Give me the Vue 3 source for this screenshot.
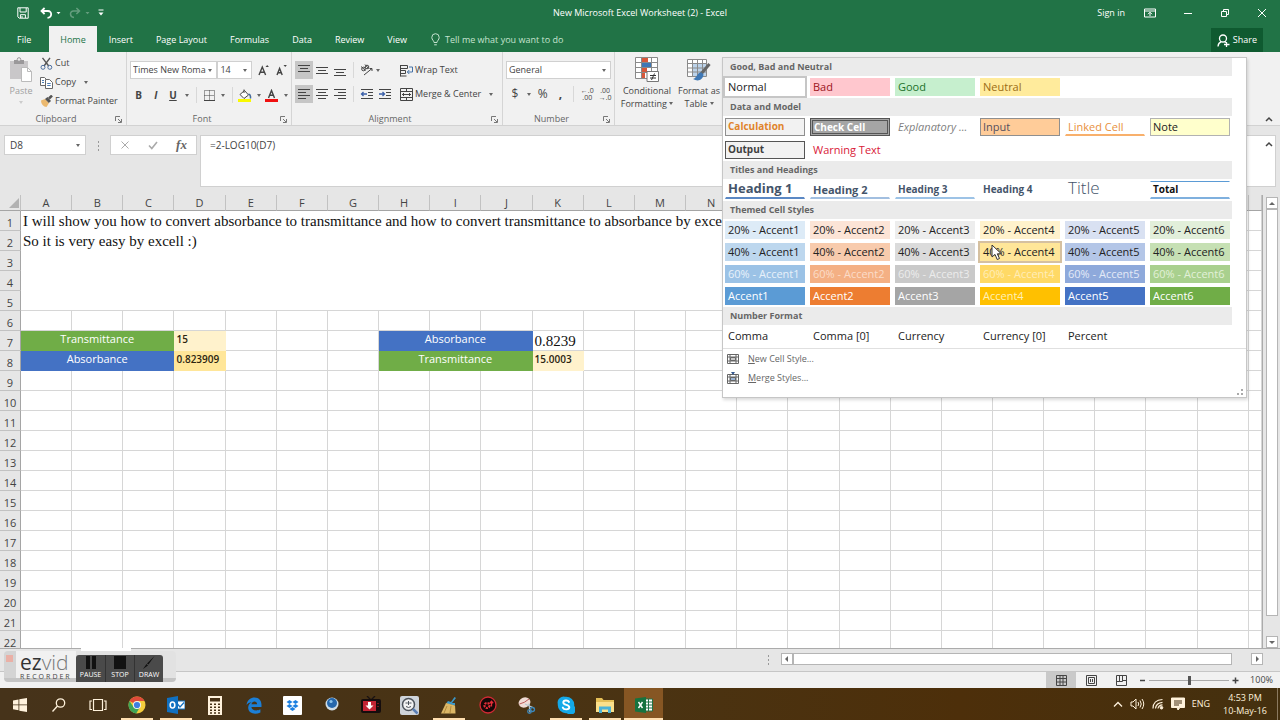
<script setup>
import { ref } from 'vue'

const activeTab = ref('Home')
const tabs = ['File', 'Home', 'Insert', 'Page Layout', 'Formulas', 'Data', 'Review', 'View']

const fontName = ref('Times New Roman')
const fontSize = ref('14')
const numberFormat = ref('General')
const cellRef = ref('D8')
const formula = ref('=2-LOG10(D7)')
const zoom = ref(100)

const accents = [1, 2, 3, 4, 5, 6]

const sections = [
  {
    title: 'Good, Bad and Neutral',
    items: [
      { label: 'Normal', kind: 'normal' },
      { label: 'Bad', kind: 'bad' },
      { label: 'Good', kind: 'good' },
      { label: 'Neutral', kind: 'neutral' },
    ],
  },
  {
    title: 'Data and Model',
    roomy: true,
    items: [
      { label: 'Calculation', kind: 'calculation' },
      { label: 'Check Cell', kind: 'check' },
      { label: 'Explanatory ...', kind: 'explanatory' },
      { label: 'Input', kind: 'input' },
      { label: 'Linked Cell', kind: 'linked' },
      { label: 'Note', kind: 'note' },
      { label: 'Output', kind: 'output' },
      { label: 'Warning Text', kind: 'warning' },
    ],
  },
  {
    title: 'Titles and Headings',
    items: [
      { label: 'Heading 1', kind: 'heading1' },
      { label: 'Heading 2', kind: 'heading2' },
      { label: 'Heading 3', kind: 'heading3' },
      { label: 'Heading 4', kind: 'heading4' },
      { label: 'Title', kind: 'title' },
      { label: 'Total', kind: 'total' },
    ],
  },
  {
    title: 'Themed Cell Styles',
    items: [
      ...accents.map((n) => ({ label: `20% - Accent${n}`, kind: `a20-${n}` })),
      ...accents.map((n) => ({ label: `40% - Accent${n}`, kind: `a40-${n}` })),
      ...accents.map((n) => ({ label: `60% - Accent${n}`, kind: `a60-${n}` })),
      ...accents.map((n) => ({ label: `Accent${n}`, kind: `a100-${n}` })),
    ],
  },
  {
    title: 'Number Format',
    items: ['Comma', 'Comma [0]', 'Currency', 'Currency [0]', 'Percent'].map((label) => ({ label, kind: 'number' })),
  },
]

const columns = 'ABCDEFGHIJKLMNOPQRSTUVWX'.split('')

const blanks = (count) => Array.from({ length: count }, () => ({ text: '', span: 1, kind: '' }))

const filled = {
  1: [
    {
      text: 'I will show you how to convert absorbance to transmittance and how to convert transmittance to absorbance by excell',
      span: 23,
      kind: 'note',
    },
    ...blanks(2),
  ],
  2: [{ text: 'So it is very easy by excell :)', span: 23, kind: 'note' }, ...blanks(2)],
  3: [{ text: '', span: 23, kind: 'note' }, ...blanks(2)],
  4: [{ text: '', span: 23, kind: 'note' }, ...blanks(2)],
  5: [{ text: '', span: 23, kind: 'note-end' }, ...blanks(2)],
  7: [
    { text: 'Transmittance', span: 3, kind: 'green' },
    { text: '15', span: 1, kind: 'pale' },
    ...blanks(3),
    { text: 'Absorbance', span: 3, kind: 'blue' },
    { text: '0.8239', span: 1, kind: 'serif' },
    ...blanks(14),
  ],
  8: [
    { text: 'Absorbance', span: 3, kind: 'blue' },
    { text: '0.823909', span: 1, kind: 'gold' },
    ...blanks(3),
    { text: 'Transmittance', span: 3, kind: 'green' },
    { text: '15.0003', span: 1, kind: 'pale' },
    ...blanks(14),
  ],
}

const rows = Array.from({ length: 22 }, (_, i) => ({ number: i + 1, cells: filled[i + 1] ?? blanks(25) }))
</script>

<template>
  <div class="excel">
    <header class="titlebar">
      <div class="quick">
        <button type="button" aria-label="Save">
          <svg width="12" height="12" viewBox="0 0 12 12"><path d="M.8.8h10.4v10.4H2.3L.8 9.8zM3 1v4h6.2V1M3.4 11V7.7h5V11M5 9v2" /></svg>
        </button>
        <button type="button" aria-label="Undo" class="quick__undo">
          <svg width="22" height="12" viewBox="0 0 22 12"><path d="M4.6 1 1.5 4l3.1 3M2 4h6c4.2 0 4.4 6.3-.5 6.8" stroke-width="1.8" /><path d="m16.5 5 2 2.2 2-2.2z" class="solid" /></svg>
        </button>
        <button type="button" aria-label="Redo" class="quick__redo">
          <svg width="22" height="12" viewBox="0 0 22 12"><path d="m7.4 1 3.1 3-3.1 3M10 4H4.5C.4 4 .4 10 5 10.5" stroke-width="1.5" /><path d="m16.5 5 2 2.2 2-2.2z" class="solid" /></svg>
        </button>
        <button type="button" aria-label="Customize toolbar">
          <svg width="6" height="8" viewBox="0 0 6 8"><path d="M.5 1h5" /><path d="m.5 3.5 2.5 3 2.5-3z" class="solid" /></svg>
        </button>
      </div>
      <h1 class="titlebar__name">New Microsoft Excel Worksheet (2) - Excel</h1>
      <div class="window">
        <a href="#" class="window__signin">Sign in</a>
        <button type="button" aria-label="Ribbon display options">
          <svg width="12" height="10" viewBox="0 0 12 10"><path d="M.5 1h11v8H.5zM.5 3h11M6 8V4.5M4 6.2l2-2 2 2" /></svg>
        </button>
        <button type="button" aria-label="Minimize"><svg width="10" height="10" viewBox="0 0 10 10"><path d="M1 5.5h8" /></svg></button>
        <button type="button" aria-label="Restore"><svg width="10" height="10" viewBox="0 0 10 10"><path d="M1.5 3.5h5v5h-5zM3.5 3V1.5h5v5H7" /></svg></button>
        <button type="button" aria-label="Close"><svg width="10" height="10" viewBox="0 0 10 10"><path d="m1 1 8 8M9 1 1 9" /></svg></button>
      </div>
    </header>

    <nav class="tabs">
      <button
        v-for="tab in tabs"
        :key="tab"
        type="button"
        class="tabs__tab"
        :class="{ 'tabs__tab--active': tab === activeTab, 'tabs__tab--file': tab === 'File' }"
        @click="activeTab = tab"
      >
        {{ tab }}
      </button>
      <button type="button" class="tabs__tell">
        <svg width="9" height="13" viewBox="0 0 9 13"><path d="M3 9.5c0-2-2.2-2.5-2.2-5.1a3.7 3.7 0 0 1 7.4 0C8.2 7 6 7.5 6 9.5zM3.2 11.8h2.6" /></svg>
        Tell me what you want to do
      </button>
      <button type="button" class="tabs__share">
        <svg width="13" height="13" viewBox="0 0 13 13"><circle cx="6" cy="4.5" r="3.5" stroke-width="1.3" /><path d="M1 12.5c.2-3 1.5-4 3.2-4.8M7.5 7.5l1.5 1M9.5 8v5M7 10.5h5.5" stroke-width="1.3" /></svg>
        Share
      </button>
    </nav>

    <section class="ribbon" aria-label="Ribbon">
      <div class="group group--clipboard">
        <div class="group__body">
          <button type="button" class="paste">
            <svg width="24" height="26" viewBox="0 0 24 26"><path d="M1 4h18v18H1z" fill="#c9c7c9" stroke="none" /><path d="M5 3h10v4H5z" fill="#9a989a" stroke="none" /><circle cx="10" cy="2.5" r="1.8" fill="#eee" stroke="#9a989a" /><path d="M12.5 10.5h6l4 4v10h-10z" fill="#fff" stroke="#bbb" /><path d="M18.5 10.5v4h4" fill="none" stroke="#bbb" /></svg>
            <span>Paste</span>
            <i class="caret"></i>
          </button>
          <div class="clip-list">
            <button type="button">
              <svg width="13" height="13" viewBox="0 0 13 13"><path d="M2.5.8 8.7 9M10 .8 4 9" stroke="#555" stroke-width="1.4" /><circle cx="3" cy="10.3" r="2" stroke="#4d6f9f" /><circle cx="9.8" cy="10.3" r="2" stroke="#4d6f9f" /></svg>
              Cut
            </button>
            <button type="button">
              <svg width="13" height="13" viewBox="0 0 13 13"><path d="M.5 1.5h4l2 2v6h-6z" fill="#fff" stroke="#686868" /><path d="M5.5 3.5h4l3 3v6h-7z" fill="#fff" stroke="#686868" /><path d="M2 4.5h2M2 6.5h2M7.2 7.5h3.5M7.2 9.5h3.5" stroke="#4d7db5" /></svg>
              Copy <i class="caret"></i>
            </button>
            <button type="button">
              <svg width="13" height="13" viewBox="0 0 13 13"><path d="M1 5.5 5 4l4 4-2.5 4C3.5 12 1 9 1 5.5z" fill="#ebb970" stroke="none" /><path d="m5 4 2.5-2 3.5 4-2.2 2z" fill="#545454" stroke="none" /><path d="m9 3.5 3-3" stroke="#545454" stroke-width="2.5" /></svg>
              Format Painter
            </button>
          </div>
        </div>
        <p class="group__label">Clipboard</p>
        <svg class="group__launcher" width="7" height="7" viewBox="0 0 7 7"><path d="M.5 5V.5H5M3 3l3 3M6.5 3v3.5H3" /></svg>
      </div>

      <div class="group group--font">
        <div class="group__body group__body--rows">
          <div class="tools">
            <label class="combo combo--font"><select v-model="fontName" aria-label="Font"><option>Times New Roman</option></select><i class="caret"></i></label>
            <label class="combo combo--size"><select v-model="fontSize" aria-label="Font size"><option>14</option></select><i class="caret"></i></label>
            <button type="button" aria-label="Increase font size"><svg width="12" height="13" viewBox="0 0 12 13"><path d="m1 11 3.3-8L7.6 11M2.2 8.2h4.2" stroke-width="1.4" /><path d="m7.5 3 1.7-2 1.7 2z" class="dark" /></svg></button>
            <button type="button" aria-label="Decrease font size"><svg width="12" height="13" viewBox="0 0 12 13"><path d="m1 11 2.6-6.5L6.2 11M2 8.8h3.3" stroke-width="1.4" /><path d="m7.5 1 1.7 2 1.7-2z" class="dark" /></svg></button>
          </div>
          <div class="tools tools--font">
            <button type="button"><b>B</b></button>
            <button type="button"><b><em>I</em></b></button>
            <button type="button"><b><u>U</u></b></button>
            <i class="caret"></i>
            <span class="rule"></span>
            <button type="button" aria-label="Borders"><svg width="11" height="11" viewBox="0 0 11 11"><path d="M.5.5h10v10H.5zM5.5.5v10M.5 5.5h10" stroke-dasharray="1 1" /><path d="M0 10.5h11" /></svg></button>
            <i class="caret"></i>
            <span class="rule"></span>
            <button type="button" aria-label="Fill color"><svg width="14" height="13" viewBox="0 0 14 13"><path d="m2 5.5 4.5-4 4 4.5L6 9.5zM6 4V.5" fill="#fff" /><path d="M10.5 5q2.800 1 1.800 4.500" stroke-width="1.500" stroke="#466b9a" /><path d="M0 10h13v3H0z" class="fill-yellow" /></svg></button>
            <i class="caret"></i>
            <button type="button" aria-label="Font color"><svg width="14" height="13" viewBox="0 0 14 13"><path d="m3.5 9 3-7.500L9.500 9M4.500 6.300h4" stroke-width="1.400" /><path d="M0 10h13v3H0z" class="fill-red" /></svg></button>
            <i class="caret"></i>
          </div>
        </div>
        <p class="group__label">Font</p>
        <svg class="group__launcher" width="7" height="7" viewBox="0 0 7 7"><path d="M.5 5V.5H5M3 3l3 3M6.5 3v3.5H3" /></svg>
      </div>

      <div class="group group--align">
        <div class="group__body">
          <div class="align-rows">
            <div class="tools tools--align">
              <button type="button" class="pressed" aria-label="Top align"><svg width="12" height="12" viewBox="0 0 12 12"><path d="M0 1.5h12M2 4.5h8M0 7.5h12" /></svg></button>
              <button type="button" aria-label="Middle align"><svg width="12" height="12" viewBox="0 0 12 12"><path d="M0 3.5h12M2 6.5h8M0 9.5h12" /></svg></button>
              <button type="button" aria-label="Bottom align"><svg width="12" height="12" viewBox="0 0 12 12"><path d="M0 5.5h12M2 8.5h8M0 11.5h12" /></svg></button>
              <span class="rule"></span>
              <button type="button" aria-label="Orientation"><svg width="14" height="12" viewBox="0 0 14 12"><circle cx="3.5" cy="5" r="1.8" /><circle cx="7" cy="3" r="1.8" /><path d="m1 2.5 4.500 4M5 .5l3.500 4M4 11l8-6.500M9.500 4.500H12V7" /></svg></button>
              <i class="caret"></i>
            </div>
            <div class="tools tools--align">
              <button type="button" class="pressed" aria-label="Align left"><svg width="12" height="12" viewBox="0 0 12 12"><path d="M0 1.5h12M0 4.5h8M0 7.5h12M0 10.5h8" /></svg></button>
              <button type="button" aria-label="Center"><svg width="12" height="12" viewBox="0 0 12 12"><path d="M0 1.5h12M2 4.5h8M0 7.5h12M2 10.5h8" /></svg></button>
              <button type="button" aria-label="Align right"><svg width="12" height="12" viewBox="0 0 12 12"><path d="M0 1.5h12M4 4.5h8M0 7.5h12M4 10.5h8" /></svg></button>
              <span class="rule"></span>
              <button type="button" aria-label="Decrease indent"><svg width="14" height="12" viewBox="0 0 14 12"><path d="M1 1.5h12M8 4.5h5M8 7.5h5M1 10.5h12" /><path d="M7 6H1.5M3.5 4 1.5 6l2 2" stroke="#3a5fa8" stroke-width="1.3" /></svg></button>
              <button type="button" aria-label="Increase indent"><svg width="14" height="12" viewBox="0 0 14 12"><path d="M1 1.5h12M8 4.5h5M8 7.5h5M1 10.5h12" /><path d="M1 6h5.5M4.5 4l2 2-2 2" stroke="#3a5fa8" stroke-width="1.3" /></svg></button>
            </div>
          </div>
          <div class="wrap-rows">
            <button type="button">
              <svg width="13" height="13" viewBox="0 0 13 13"><path d="M.5 1v11.5M.5 1.5h7v3h-7M.5 6.5h5v3h-5M.5 12h6" /><path d="M9 3h3.5v5H7.5M9.3 6 7.3 8l2 2" stroke="#4472a8" /></svg>
              Wrap Text
            </button>
            <button type="button">
              <svg width="13" height="13" viewBox="0 0 13 13"><path d="M.5.5h12v12H.5zM.5 3.5h12M.5 9.5h12M6.5.5v3M6.5 9.5v3M2 6.5h9M4 5 2.5 6.5 4 8M9 5l1.5 1.5L9 8" /></svg>
              Merge &amp; Center <i class="caret"></i>
            </button>
          </div>
        </div>
        <p class="group__label">Alignment</p>
        <svg class="group__launcher" width="7" height="7" viewBox="0 0 7 7"><path d="M.5 5V.5H5M3 3l3 3M6.5 3v3.5H3" /></svg>
      </div>

      <div class="group group--number">
        <div class="group__body group__body--rows">
          <div class="tools">
            <label class="combo combo--number"><select v-model="numberFormat" aria-label="Number format"><option>General</option></select><i class="caret"></i></label>
          </div>
          <div class="tools tools--number">
            <button type="button" class="big">$</button>
            <i class="caret"></i>
            <button type="button" class="big">%</button>
            <button type="button" class="big"><b>,</b></button>
            <span class="rule"></span>
            <button type="button" class="decimals"><span>←.0</span><span>.00</span></button>
            <button type="button" class="decimals"><span>.00</span><span>→.0</span></button>
          </div>
        </div>
        <p class="group__label">Number</p>
        <svg class="group__launcher" width="7" height="7" viewBox="0 0 7 7"><path d="M.5 5V.5H5M3 3l3 3M6.5 3v3.5H3" /></svg>
      </div>

      <div class="styles-group">
        <button type="button" class="tall">
          <svg width="24" height="25" viewBox="0 0 24 25"><path d="M.5.5h22v21H.5zM.5 5.5h22M.5 10.5h22M.5 15.5h22M6.5.5v21M16.5.5v21" fill="#fff" stroke="#8a8a8a" /><path d="M7 1h6v4H7zM7 11h5v4H7zM7 16h3v5H7z" fill="#d8583a" stroke="none" /><path d="M7 6h9v4H7z" fill="#3f78b5" stroke="none" /><path d="M12 14.5h11.500v10H12z" fill="#fff" stroke="#777" /><path d="M15 18.5h6M15 21h6M19.500 16.500l-3 6.500" stroke="#333" /></svg>
          <span>Conditional</span>
          <span>Formatting <i class="caret"></i></span>
        </button>
        <button type="button" class="tall">
          <svg width="24" height="25" viewBox="0 0 24 25"><path d="M.5 2.5h19v17H.5z" fill="#fff" stroke="#8a8a8a" /><path d="M5 7h14v12H5z" fill="#bcd3ea" stroke="none" /><path d="M.5 6.5h19M.5 11h19M.5 15h19M5.5 2.5v17M10.5 2.5v17M15.5 2.5v17" stroke="#8a8a8a" /><path d="M22.5 7 14 17" stroke="#666" stroke-width="3" /><path d="M14.5 15.5c-4-1-4 5-8.500 6.500 5 3 10 1 10.500-4.500z" fill="#3f78b5" stroke="none" /></svg>
          <span>Format as</span>
          <span>Table <i class="caret"></i></span>
        </button>
      </div>
      <button type="button" class="collapse" aria-label="Collapse ribbon"><svg width="8" height="6" viewBox="0 0 8 6"><path d="m1 5 3-3 3 3" stroke-width="1.5" /></svg></button>
    </section>

    <section class="formula">
      <label class="formula__name"><input v-model="cellRef" aria-label="Name box" /><i class="caret"></i></label>
      <span class="formula__grip" aria-hidden="true"><i></i><i></i><i></i></span>
      <div class="formula__tools">
        <button type="button" aria-label="Cancel"><svg width="10" height="10" viewBox="0 0 10 10"><path d="m1.5 1.5 7 7M8.5 1.5l-7 7" /></svg></button>
        <button type="button" aria-label="Enter"><svg width="10" height="10" viewBox="0 0 10 10"><path d="m1 5.5 2.800 3L9 2" stroke-width="1.600" /></svg></button>
        <button type="button" class="fx">fx</button>
      </div>
      <div class="formula__box">
        <textarea v-model="formula" aria-label="Formula bar"></textarea>
        <svg width="8" height="6" viewBox="0 0 8 6"><path d="m1 5 3-3 3 3" stroke-width="1.5" /></svg>
      </div>
    </section>

    <main class="sheet">
      <div class="sheet__view">
        <table class="grid">
          <colgroup>
            <col class="grid__head-col" />
            <col v-for="c in columns" :key="c" />
            <col class="grid__last-col" />
          </colgroup>
          <thead>
            <tr>
              <th class="grid__corner"><svg width="10" height="10" viewBox="0 0 10 10"><path d="M10 0v10H0z" /></svg></th>
              <th v-for="c in columns" :key="c" scope="col">{{ c }}</th>
              <th></th>
            </tr>
          </thead>
          <tbody>
            <tr v-for="row in rows" :key="row.number">
              <th scope="row">{{ row.number }}</th>
              <td v-for="(cell, i) in row.cells" :key="i" :colspan="cell.span" :class="cell.kind && `cell-${cell.kind}`">{{ cell.text }}</td>
            </tr>
          </tbody>
        </table>
      </div>
      <div class="vscroll" aria-hidden="true">
        <span class="vscroll__btn"><i class="up"></i></span>
        <span class="vscroll__thumb"></span>
        <span class="vscroll__btn"><i class="down"></i></span>
      </div>
    </main>

    <div class="sheetbar">
      <span class="sheetbar__tab"></span>
      <span class="sheetbar__grip"><i></i><i></i><i></i></span>
      <div class="hscroll" aria-hidden="true">
        <span class="hscroll__btn"><i class="left"></i></span>
        <span class="hscroll__thumb"></span>
        <span class="hscroll__btn"><i class="right"></i></span>
      </div>
    </div>

    <footer class="status">
      <button type="button" class="status__view status__view--on" aria-label="Normal view"><svg width="11" height="11" viewBox="0 0 11 11"><path d="M.5.5h10v10H.5zM.5 3.5h10M.5 7h10M4 .5v10M7 .5v10" /></svg></button>
      <button type="button" class="status__view" aria-label="Page layout view"><svg width="11" height="11" viewBox="0 0 11 11"><path d="M.5.5h10v10H.5zM2.5 2.5h6v6h-6zM4.5 4v3M6.5 4v3" /></svg></button>
      <button type="button" class="status__view" aria-label="Page break view"><svg width="11" height="11" viewBox="0 0 11 11"><path d="M.5.5h10v10H.5zM.5 6.5h6v-6M3.5 1v5M6.5 5.5h4" /></svg></button>
      <button type="button" class="status__step" aria-label="Zoom out"><svg width="7" height="7" viewBox="0 0 7 7"><path d="M1 3.5h5" stroke-width="1.5" /></svg></button>
      <input v-model="zoom" type="range" min="10" max="190" aria-label="Zoom" />
      <button type="button" class="status__step" aria-label="Zoom in"><svg width="7" height="7" viewBox="0 0 7 7"><path d="M.5 3.5h6M3.5.5v6" stroke-width="1.5" /></svg></button>
      <span class="status__zoom">{{ zoom }}%</span>
    </footer>

    <nav class="taskbar" aria-label="Taskbar">
      <button type="button" aria-label="Start"><svg width="16" height="16" viewBox="0 0 16 16"><path d="m1 3.5 5.5-1v5H1zM7.3 2.3 15 1v6.5H7.3zM1 8.3h5.5v5l-5.5-1zM7.3 8.3H15V15l-7.7-1.3z" fill="#fff2dc" /></svg></button>
      <button type="button" aria-label="Search"><svg width="16" height="16" viewBox="0 0 16 16"><circle cx="9.5" cy="6" r="4.2" stroke="#fff2dc" stroke-width="1.3" /><path d="m6.5 9-5 5.5" stroke="#fff2dc" stroke-width="1.3" /></svg></button>
      <button type="button" aria-label="Task view"><svg width="18" height="14" viewBox="0 0 18 14"><path d="M4.5 1.5h9v11h-9zM3 3H1v8.5h2M15 3h2v8.5h-2" stroke="#fff2dc" stroke-width="1.2" /></svg></button>
      <button type="button" class="open" aria-label="Chrome"><svg width="18" height="18" viewBox="0 0 18 18"><circle cx="9" cy="9" r="8.5" fill="#f5cd3d" /><path d="M9 9 1.5 5A8.5 8.5 0 0 1 16.5 5H9z" fill="#e04b3a" /><path d="M1.5 5a8.5 8.5 0 0 0 6.7 12.5L12 11 5.5 11z" fill="#3fa557" /><circle cx="9" cy="9" r="4" fill="#f4f4f4" /><circle cx="9" cy="9" r="3.1" fill="#3f7fe0" /></svg></button>
      <button type="button" class="open" aria-label="Outlook"><svg width="18" height="18" viewBox="0 0 18 18"><path d="M9 5h9v8H9z" fill="#fff" stroke="#1070c0" /><path d="m10.5 8 2.5 3 4-4.5" fill="none" stroke="#1070c0" stroke-width="1.2" /><path d="M0 2 11 0v18L0 16z" fill="#1070c0" /><ellipse cx="5.5" cy="9" rx="2.3" ry="3" fill="none" stroke="#fff" stroke-width="1.6" /></svg></button>
      <button type="button" aria-label="Calculator"><svg width="14" height="19" viewBox="0 0 14 19"><path d="M0 0h14v19H0z" fill="#fff2dc" /><path d="M2 2h10v3.5H2z" fill="#463014" /><path d="M2 8.2h10M2 11.2h10M2 14.2h10M2 17h10" stroke="#463014" stroke-width="1.6" stroke-dasharray="2 2" /></svg></button>
      <button type="button" aria-label="Edge"><svg width="16" height="17" viewBox="0 0 16 17"><path d="M.5 8C1.3 2.5 5 .5 8.5.5c4.7 0 7 3.5 7 7.3V10H5.4c.3 3.8 5.8 4.2 9 2.2v3.2C9 18 2.5 16.5 2.2 11c-.2-2.8 1.5-4.8 3.6-5.8C3.5 5.3 1.5 6.5.5 8zm5-.8h5.6c0-3.6-5-3.7-5.6 0z" fill="#1c7fd6" /></svg></button>
      <button type="button" aria-label="Dropbox"><svg width="19" height="19" viewBox="0 0 19 19"><rect width="19" height="19" rx="1" fill="#fff" /><path d="m6.5 4 3 2-3 2-3-2zM12.5 4l3 2-3 2-3-2zM6.5 8l3 2-3 2-3-2zM12.5 8l3 2-3 2-3-2zM9.5 11l3 2-3 2-3-2z" fill="#1b7fe0" /></svg></button>
      <button type="button" aria-label="Media"><svg width="14" height="16" viewBox="0 0 14 16"><circle cx="7" cy="7" r="6.5" fill="#cfdde6" /><circle cx="7" cy="6" r="5" fill="#2668ad" /><circle cx="6" cy="4.5" r="1.6" fill="#8cc4ec" /></svg></button>
      <button type="button" aria-label="TV downloader"><svg width="20" height="18" viewBox="0 0 20 18"><path d="m6 0 4 4 4-4" fill="none" stroke="#191212" stroke-width="1.3" /><rect y="3" width="20" height="14" rx="2" fill="#150d0d" /><rect x="2" y="5" width="13" height="10" fill="#c22433" /><path d="M7 6h3v3.5h2.5L8.5 13.5l-4-4H7z" fill="#fff" /><path d="M17 7v1M17 10v1" stroke="#c22" /></svg></button>
      <button type="button" aria-label="File search"><svg width="19" height="19" viewBox="0 0 19 19"><rect width="19" height="19" rx="2" fill="#cfd4da" /><circle cx="8.5" cy="8.5" r="6" fill="#f3f3f3" stroke="#4d535b" stroke-width="1.5" /><path d="M5.5 7h2.3M9.2 7h2.3M6 10.5q2.5 2 5 0M8.5 5v4" fill="none" stroke="#4d535b" /><path d="m13 13 4.5 4.5" stroke="#5b7fb5" stroke-width="2.5" /></svg></button>
      <button type="button" class="open" aria-label="Cleaner"><svg width="17" height="17" viewBox="0 0 17 17"><path d="m14.5 0 1.5 1-4 5h3v2.5L6 6.5 8 4l3 1z" fill="#3c98c9" /><path d="m6 6 9 2.5.5 8H1z" fill="#dcb766" /><path d="m7 9-3 7M11 9l-1 7" stroke="#b08a3e" /></svg></button>
      <button type="button" aria-label="Recorder"><svg width="18" height="18" viewBox="0 0 18 18"><circle cx="9" cy="9" r="8" fill="#160808" stroke="#d22a34" stroke-width="1.3" /><circle cx="8" cy="9.5" r="2.5" fill="none" stroke="#e32e38" stroke-width="2.2" stroke-dasharray="2 1" /><path d="M12.5 10.5v-5M10.8 7.2l1.7-1.9 1.7 1.9" fill="none" stroke="#e32e38" stroke-width="1.3" /></svg></button>
      <button type="button" aria-label="Snipping tool"><svg width="18" height="18" viewBox="0 0 18 18"><ellipse cx="6.5" cy="6.5" rx="6" ry="5" fill="#f0dcd6" transform="rotate(-20 6.5 6.5)" /><path d="M1.5 8q5-1 9.5-5" fill="none" stroke="#bc5c5c" /><path d="m7 8 9 4M11 7.5l1 9" stroke="#b7c6cf" stroke-width="1.3" /><circle cx="14.5" cy="13.5" r="2" fill="none" stroke="#3b86b8" stroke-width="1.3" /><circle cx="11.5" cy="15.5" r="1.8" fill="none" stroke="#3b86b8" stroke-width="1.3" /></svg></button>
      <button type="button" class="open" aria-label="Skype"><svg width="18" height="18" viewBox="0 0 18 18"><path d="M4.5 1A5 5 0 0 1 8 .7 8.3 8.3 0 0 1 17.2 10 4.7 4.7 0 0 1 10 17.2 8.3 8.3 0 0 1 .8 8C0 5.5 1.5 2 4.5 1z" fill="#14a9e8" /><path d="M12 6C11 3.8 6.3 4 6.3 6.5c0 3 6 1.8 6 4.8 0 2.7-5.5 2.8-6.5.3" fill="none" stroke="#fff" stroke-width="1.9" stroke-linecap="round" /></svg></button>
      <button type="button" class="open" aria-label="File Explorer"><svg width="18" height="16" viewBox="0 0 18 16"><path d="M0 1h6l1.5 2H18v12H0z" fill="#e5bf57" /><path d="M0 5h18v10H0z" fill="#fbe08b" /><path d="M3 16V9.5h12V16h-3v-3.5H6V16z" fill="#4bb3d8" /></svg></button>
      <button type="button" class="open current" aria-label="Excel"><svg width="18" height="16" viewBox="0 0 18 16"><path d="M9 2h8.5v12H9z" fill="#fff" stroke="#217346" /><path d="M10 5h7M10 8h7M10 11h7M13.5 2v12" stroke="#217346" /><path d="M0 1.5 11 0v16L0 14.5z" fill="#16733f" /><path d="m3.5 5 4 6M7.5 5l-4 6" stroke="#fff" stroke-width="1.4" /></svg></button>

      <div class="tray">
        <svg width="10" height="8" viewBox="0 0 10 8"><path d="m1 6.5 4-4 4 4" stroke-width="1.3" /></svg>
        <svg width="15" height="12" viewBox="0 0 15 12"><path d="M1 4h2l3-3v10L3 8H1zM8 4q1.5 2 0 4M10 2.5q2.5 3.5 0 7M12 1q3.5 5 0 10" /></svg>
        <svg width="12" height="12" viewBox="0 0 12 12"><path d="M1 10.5Q1 2 10.5 1.5M3.5 10.5Q4 5 10.5 4.3M6 10.5q.5-3.5 4.5-3.7" stroke-width="1.2" /><circle cx="9.5" cy="9.7" r="1.3" fill="#fff2dc" /></svg>
        <svg width="14" height="14" viewBox="0 0 14 14"><path d="M.5 1h13v9.5H9L7 13l-1-2.5H.5z" fill="#fff2dc" /><path d="M3 4h8M3 6h8M3 8h5" stroke="#463014" /></svg>
        <span>ENG</span>
        <span class="tray__clock"><span>4:53 PM</span><span>10-May-16</span></span>
        <span class="tray__desktop"></span>
      </div>
    </nav>

    <aside class="gallery" aria-label="Cell styles">
      <section v-for="s in sections" :key="s.title" class="gallery__section">
        <h2 class="gallery__title">{{ s.title }}</h2>
        <div class="gallery__items" :class="{ 'gallery__items--roomy': s.roomy }">
          <button v-for="item in s.items" :key="item.label" type="button" class="chip" :class="`chip--${item.kind}`">
            {{ item.label }}
            <svg v-if="item.kind === 'a40-4'" class="pointer" width="12" height="17" viewBox="0 0 12 17"><path d="M1 1v12l3-2.6L6.2 15.5l2.3-1L6.3 9.8h4z" /></svg>
          </button>
        </div>
      </section>
      <div class="gallery__menu">
        <button type="button">
          <svg width="12" height="10" viewBox="0 0 12 10"><path d="M.5.5h11v9H.5zM.5 3h11M.5 7h11M3 .5v9M9 .5v9" /><path d="M3.5 3.5h5v3h-5z" fill="#c9c9c9" /></svg>
          <span><u>N</u>ew Cell Style...</span>
        </button>
        <button type="button">
          <svg width="12" height="12" viewBox="0 0 12 12"><path d="M.5 2.5h11v9H.5zM.5 5h11M.5 9h11M3 2.5v9M9 2.5v9" /><path d="M3.5 5.5h5v3h-5z" fill="#9db5d6" /><path d="M4 0h4L6 3z" fill="#34588f" stroke="none" /></svg>
          <span><u>M</u>erge Styles...</span>
        </button>
      </div>
      <svg class="gallery__grip" width="6" height="6" viewBox="0 0 6 6"><path d="M4 0h2v2H4zM4 4h2v2H4zM0 4h2v2H0z" /></svg>
    </aside>

    <aside class="ezvid" aria-label="Screen recorder">
      <span class="ezvid__rec"></span>
      <span class="ezvid__logo"><span class="ezvid__name"><b>ez</b>vid</span><span class="ezvid__sub">RECORDER</span></span>
      <div class="ezvid__buttons">
        <button type="button"><svg width="12" height="13" viewBox="0 0 12 13"><path d="M1 0h4v13H1zM7 0h4v13H7z" /></svg>PAUSE</button>
        <button type="button"><svg width="12" height="13" viewBox="0 0 12 13"><path d="M0 0h12v13H0z" /></svg>STOP</button>
        <button type="button"><svg width="12" height="13" viewBox="0 0 12 13"><path d="m11.5 0-6 8.5-1.5-1zM3.5 8l1.5 1.5L0 13z" /></svg>DRAW</button>
      </div>
    </aside>
  </div>
</template>

<style>
body {
  margin: 0;
  overflow: hidden;
}
</style>

<style scoped>
.excel {
  position: relative;
  display: flex;
  flex-direction: column;
  height: 100vh;
  overflow: hidden;
  background: #e6e6e6;
  font-family: 'Open Sans', 'Noto Sans', sans-serif;
  font-size: 9px;
  line-height: 14px;
  color: #444;
}

button,
input,
select,
textarea {
  margin: 0;
  border: 0;
  padding: 0;
  background: none;
  font: inherit;
  color: inherit;
}

svg {
  flex: none;
  fill: none;
  stroke: currentColor;
}

.caret {
  flex: none;
  display: inline-block;
  border: 2px solid transparent;
  border-top: 3px solid #666;
  border-bottom: 0;
}

/* title bar and tabs */
.titlebar {
  display: grid;
  grid-template-columns: 1fr auto 1fr;
  align-items: center;
  height: 26px;
  background: #217346;
  color: #fff;
}

.quick {
  display: flex;
  align-items: center;
  gap: 7px;
  padding-left: 17px;
}

.quick button,
.window button {
  display: flex;
}

.quick__undo {
  margin-left: 4px;
}

.quick__redo {
  opacity: 0.3;
}

.solid {
  fill: #fff;
  stroke: none;
}

.titlebar__name {
  margin: 0;
  font-size: 9px;
  font-weight: 400;
}

.window {
  display: flex;
  align-items: center;
  justify-content: flex-end;
  gap: 27px;
  padding-right: 13px;
}

.window__signin {
  margin-right: -8px;
  color: inherit;
  text-decoration: none;
}

.tabs {
  display: flex;
  gap: 1px;
  height: 26px;
  background: #217346;
  color: #fff;
}

.tabs__tab {
  padding: 1px 11px 0;
}

.tabs__tab--file {
  padding: 1px 17px 0;
}

.tabs__tab--active {
  background: #f1f1f1;
  color: #217346;
}

.tabs__tell {
  display: flex;
  align-items: center;
  gap: 5px;
  padding: 1px 12px 0;
  color: #c5e3d0;
}

.tabs__share {
  display: flex;
  align-items: center;
  gap: 3px;
  margin: 2px 17px 0 auto;
  padding: 0 6px;
  background: #0f5a30;
}

/* ribbon */
.ribbon {
  display: flex;
  height: 73px;
  border-bottom: 1px solid #d2d2d2;
  background: #f1f1f1;
}

.group {
  position: relative;
  display: flex;
  flex-direction: column;
  flex: none;
  box-sizing: border-box;
  padding-top: 4px;
  border-right: 1px solid #d5d5d5;
}

.group--clipboard {
  width: 127px;
}

.group--font {
  width: 165px;
}

.group--align {
  width: 211px;
}

.group--number {
  width: 112px;
}

.group__body {
  display: flex;
  flex: 1;
}

.group__body--rows,
.align-rows,
.wrap-rows {
  display: flex;
  flex-direction: column;
  gap: 6px;
  padding-top: 5px;
}

.group__label {
  margin: 0;
  padding-right: 14px;
  text-align: center;
  line-height: 12px;
  color: #666;
}

.group__launcher {
  position: absolute;
  right: 4px;
  bottom: 2px;
  color: #777;
}

.paste {
  display: flex;
  flex-direction: column;
  align-items: center;
  gap: 1px;
  width: 40px;
  padding: 1px 0 0 2px;
  color: #a0a0a0;
}

.paste .caret {
  margin-top: 2px;
  border-top-color: #ccc;
}

.clip-list {
  display: flex;
  flex-direction: column;
  gap: 5px;
}

.clip-list button,
.wrap-rows button {
  display: flex;
  align-items: center;
  gap: 2px;
}

.clip-list .caret,
.wrap-rows .caret {
  margin-left: 6px;
}

.tools {
  display: flex;
  align-items: center;
  height: 18px;
  padding-left: 3px;
}

.tools button {
  display: flex;
  align-items: center;
  justify-content: center;
}

.combo {
  position: relative;
  display: flex;
  box-sizing: border-box;
  height: 18px;
  border: 1px solid #d0d0d0;
  background: #fff;
}

.combo select {
  appearance: none;
  width: 100%;
  padding: 0 10px 0 2px;
}

.combo .caret {
  position: absolute;
  top: 7px;
  right: 4px;
  pointer-events: none;
}

.combo--font {
  width: 88px;
}

.combo--size {
  width: 35px;
  margin-right: 3px;
}

.combo--number {
  width: 105px;
}

.tools > button {
  width: 18px;
}

.tools--font {
  height: 20px;
  font-size: 10px;
}

.tools--font > .caret,
.tools--number > .caret {
  margin: 0 3px;
}

.rule {
  flex: none;
  width: 1px;
  height: 16px;
  margin: 0 4px;
  background: #d8d8d8;
}

.dark {
  fill: #444;
  stroke: none;
}

.fill-yellow {
  fill: #f9f900;
  stroke: none;
}

.fill-red {
  fill: #f01010;
  stroke: none;
}

.tools--align > button {
  height: 18px;
}

.tools--align .pressed {
  background: #c6c6c6;
}

.wrap-rows {
  padding-left: 6px;
}

.wrap-rows button {
  height: 18px;
}

.tools--number > .big {
  font-size: 12px;
}

.tools--number .decimals {
  flex-direction: column;
  font-size: 7px;
  line-height: 7px;
}

.styles-group {
  display: flex;
  flex: none;
  gap: 2px;
  padding: 5px 3px 0 4px;
}

.tall {
  display: flex;
  flex-direction: column;
  align-items: center;
  width: 56px;
  line-height: 13px;
  white-space: nowrap;
}

.tall svg {
  margin-bottom: 2px;
}

.tall + .tall {
  width: 44px;
}

.tall .caret {
  vertical-align: 2px;
}

.collapse {
  display: flex;
  align-self: flex-end;
  margin: 0 7px 3px auto;
}

/* formula bar */
.formula {
  display: flex;
  align-items: flex-start;
  height: 60px;
  padding: 9px 4px 0;
  font-size: 10px;
}

.formula__name {
  display: flex;
  align-items: center;
  box-sizing: border-box;
  width: 82px;
  height: 20px;
  border: 1px solid #d0d0d0;
  padding: 0 5px;
  background: #fff;
}

.formula__name input {
  flex: 1;
  min-width: 0;
}

.formula__grip,
.sheetbar__grip {
  display: flex;
  flex-direction: column;
  align-items: center;
  gap: 2px;
  width: 24px;
  padding-top: 6px;
}

.formula__grip i,
.sheetbar__grip i {
  width: 1px;
  height: 2px;
  background: #999;
}

.formula__tools {
  display: flex;
  align-items: center;
  justify-content: space-around;
  box-sizing: border-box;
  width: 87px;
  height: 20px;
  margin-right: 3px;
  border: 1px solid #d0d0d0;
  background: #fff;
  color: #aaa;
}

.formula__tools button {
  display: flex;
}

.formula__tools .fx {
  font-family: 'Liberation Serif', serif;
  font-size: 13px;
  font-style: italic;
  font-weight: 700;
  color: #666;
}

.formula__box {
  display: flex;
  flex: 1;
  box-sizing: border-box;
  height: 52px;
  border: 1px solid #d0d0d0;
  padding: 2px 2px 0 9px;
  background: #fff;
}

.formula__box textarea {
  flex: 1;
  resize: none;
  outline: 0;
}

.formula__box svg {
  margin-top: 3px;
}

/* sheet */
.sheet {
  display: flex;
  flex: 1;
  min-height: 0;
}

.sheet__view {
  flex: 1;
  min-width: 0;
  overflow: hidden;
  border-right: 1px solid #ababab;
}

.grid {
  width: 100%;
  table-layout: fixed;
  border-spacing: 0;
  background: #fff;
}

.grid__head-col {
  width: 21px;
}

.grid__last-col {
  width: 13px;
}

.grid th,
.grid td {
  box-sizing: border-box;
  height: 20px;
  padding: 0;
  border-right: 1px solid #d6d6d6;
  border-bottom: 1px solid #d6d6d6;
  line-height: 16px;
  white-space: nowrap;
  overflow: hidden;
}

.grid th {
  background: #e6e6e6;
  font-size: 11px;
  font-weight: 400;
}

.grid thead th {
  height: 16px;
  line-height: 14px;
  border-right-color: #c2c2c2;
  border-bottom-color: #a5a5a5;
}

.grid tbody th {
  vertical-align: bottom;
  line-height: 14px;
  border-right-color: #a5a5a5;
  border-bottom-color: #c2c2c2;
}

.grid__corner svg {
  display: block;
  margin: 1px 1px 0 auto;
  fill: #b2b2b2;
  stroke: none;
}

.grid .cell-note,
.grid .cell-note-end,
.grid .cell-serif {
  padding-left: 2px;
  font-family: 'Liberation Serif', serif;
  font-size: 15px;
  color: #111;
}

.grid .cell-note {
  border-bottom-color: #fff;
}

.grid .cell-green,
.grid .cell-blue {
  border-color: transparent;
  vertical-align: top;
  text-align: center;
  font-size: 11px;
  color: #fff;
}

.grid .cell-green {
  background: #70ad47;
}

.grid .cell-blue {
  background: #4472c4;
}

.grid .cell-pale,
.grid .cell-gold {
  border-color: transparent;
  padding-left: 2px;
  vertical-align: top;
  font-size: 10px;
  font-weight: 600;
  color: #2b2410;
}

.grid .cell-pale {
  background: #fff2cc;
}

.grid .cell-gold {
  background: #ffe699;
}

.vscroll {
  display: flex;
  flex-direction: column;
  align-items: center;
  width: 17px;
  padding-top: 2px;
}

.vscroll__btn,
.vscroll__thumb,
.hscroll__btn,
.hscroll__thumb {
  box-sizing: border-box;
  border: 1px solid #b5b5b5;
  background: #fff;
}

.vscroll__btn,
.hscroll__btn {
  display: flex;
  align-items: center;
  justify-content: center;
  flex: none;
  width: 12px;
  height: 12px;
}

.vscroll__thumb {
  flex: 1;
  width: 12px;
  margin-bottom: 20px;
}

.up,
.down,
.left,
.right {
  border: 3px solid transparent;
}

.up {
  border-top: 0;
  border-bottom-color: #666;
}

.down {
  border-bottom: 0;
  border-top-color: #666;
}

.left {
  border-left: 0;
  border-right-color: #666;
}

.right {
  border-right: 0;
  border-left-color: #666;
}

.sheetbar {
  display: flex;
  align-items: flex-start;
  box-sizing: border-box;
  height: 24px;
  border-top: 1px solid #ababab;
  border-bottom: 1px solid #c6c6c6;
}

.sheetbar__tab {
  width: 50px;
  height: 6px;
  margin: -1px auto 0 81px;
  background: #fff;
}

.hscroll {
  display: flex;
  flex: 0 0 39%;
  box-sizing: border-box;
  padding: 4px 17px 0 0;
}

.hscroll__thumb {
  flex: 1;
  margin-right: 19px;
}

/* status bar */
.status {
  display: flex;
  align-items: center;
  justify-content: flex-end;
  height: 16px;
  padding-right: 7px;
  background: #f1f1f1;
}

.status button {
  display: flex;
  align-items: center;
  justify-content: center;
}

.status__view {
  width: 30px;
  height: 16px;
}

.status__view--on {
  background: #c9c9c9;
}

.status__step {
  width: 13px;
}

.status input {
  appearance: none;
  width: 80px;
  height: 10px;
}

.status input::-webkit-slider-runnable-track {
  height: 1px;
  background: #aaa;
}

.status input::-webkit-slider-thumb {
  appearance: none;
  width: 3px;
  height: 9px;
  margin-top: -4px;
  background: #555;
}

.status__zoom {
  margin-left: 8px;
}

/* taskbar */
.taskbar {
  display: flex;
  flex: none;
  height: 32px;
  background: linear-gradient(90deg, #46331a, #4a3312 50%, #4d2f0a 75%, #44300f);
}

.taskbar > button {
  display: flex;
  align-items: center;
  justify-content: center;
  box-sizing: border-box;
  width: 39px;
  border-top: 2px solid transparent;
}

.taskbar > button > svg {
  stroke: none;
}

.taskbar > .open {
  background: linear-gradient(#ffdfb0, #ffdfb0) center bottom / 32px 2px no-repeat;
}

.taskbar > .current {
  border-top: 0;
  padding-top: 2px;
  background: linear-gradient(transparent 30px, #ffdfb0 30px), #865623;
}

.tray {
  display: flex;
  align-items: center;
  gap: 7px;
  margin-left: auto;
  color: #fff2dc;
}

.tray__clock {
  display: flex;
  flex-direction: column;
  align-items: center;
  margin: 0 3px 0 6px;
  line-height: 13px;
}

.tray__desktop {
  width: 3px;
  height: 32px;
  box-sizing: border-box;
  border-left: 1px solid #8b7a60;
}

/* cell style gallery */
.gallery {
  position: absolute;
  top: 57px;
  right: 33px;
  box-sizing: border-box;
  width: 525px;
  height: 341px;
  border: 1px solid #c6c6c6;
  background: #fff;
  box-shadow: 1px 2px 3px rgba(0, 0, 0, 0.15);
  font-size: 11px;
}

.gallery__section {
  margin-right: 14px;
}

.gallery__title {
  margin: 0;
  padding-left: 7px;
  background: #ebebeb;
  font-size: 9px;
  line-height: 18px;
  font-weight: 700;
  color: #666;
}

.gallery__items {
  display: grid;
  grid-template-columns: repeat(6, 80px);
  gap: 4px 5px;
  padding: 2px;
}

.gallery__items--roomy {
  row-gap: 5px;
}

.chip {
  position: relative;
  display: flex;
  align-items: flex-start;
  box-sizing: border-box;
  height: 18px;
  border: 1px solid transparent;
  padding: 0 2px;
  line-height: 15px;
  white-space: nowrap;
  color: #222;
}

.chip--normal {
  outline: 2px solid #c6c6c6;
}

.chip--bad { background: #ffc7ce; color: #9c1420; }
.chip--good { background: #c6efce; color: #22712b; }
.chip--neutral { background: #ffeb9c; color: #9c6d14; }
.chip--calculation { border-color: #8f8f8f; background: #f2f2f2; font-size: 10px; font-weight: 700; color: #e0842c; }
.chip--check { border: 3px double #555; padding: 0 1px; background: #a5a5a5; font-size: 10px; line-height: 12px; font-weight: 700; color: #fff; }
.chip--explanatory { font-style: italic; color: #7f7f7f; }
.chip--input { border-color: #8f8f8f; background: #ffcc99; color: #55505f; }
.chip--linked { border-bottom: 2px solid #f8b06c; color: #e8903c; }
.chip--note { border-color: #b2b2b2; background: #ffffcc; }
.chip--output { border-color: #555; background: #f2f2f2; font-size: 10px; font-weight: 700; color: #3f3f3f; }
.chip--warning { color: #d92038; }
.chip--heading1 { border-bottom: 2px solid #5b88c4; font-size: 13px; line-height: 12px; font-weight: 700; color: #44546a; }
.chip--heading2 { border-bottom: 2px solid #a2bfe0; font-size: 11px; font-weight: 700; color: #44546a; }
.chip--heading3 { border-bottom: 2px solid #9dc3e6; font-size: 10px; font-weight: 700; color: #44546a; }
.chip--heading4 { font-size: 10px; font-weight: 700; color: #44546a; }
.chip--title { font-size: 17px; line-height: 12px; font-weight: 300; color: #44546a; }
.chip--total { border-top-color: #5b9bd5; border-bottom: 2px solid #7fb0de; font-size: 10px; font-weight: 700; color: #111; }
.chip--a20-1 { background: #ddebf7; }
.chip--a20-2 { background: #fce4d6; }
.chip--a20-3 { background: #ededed; }
.chip--a20-4 { background: #fff2cc; }
.chip--a20-5 { background: #d9e1f2; }
.chip--a20-6 { background: #e2efda; }
.chip--a40-1 { background: #bdd7ee; }
.chip--a40-2 { background: #f8cbad; }
.chip--a40-3 { background: #dbdbdb; }
.chip--a40-4 { outline: 2px solid #d5c0a0; background: #ffe699; }
.chip--a40-5 { background: #b4c6e7; }
.chip--a40-6 { background: #c6e0b4; }
.chip--a60-1 { background: #9bc2e6; color: #e8f1fa; }
.chip--a60-2 { background: #f4b084; color: #fbdcc8; }
.chip--a60-3 { background: #c9c9c9; color: #ececec; }
.chip--a60-4 { background: #ffd966; color: #ffedb8; }
.chip--a60-5 { background: #8ea9db; color: #e4eaf7; }
.chip--a60-6 { background: #a9d08e; color: #e2f0d8; }
.chip--a100-1 { background: #5b9bd5; color: #fff; }
.chip--a100-2 { background: #ed7d31; color: #fff; }
.chip--a100-3 { background: #a5a5a5; color: #fff; }
.chip--a100-4 { background: #ffc000; color: #fff0b8; }
.chip--a100-5 { background: #4472c4; color: #fff; }
.chip--a100-6 { background: #70ad47; color: #fff; }

.pointer {
  position: absolute;
  top: 0;
  left: 10px;
  fill: #fff;
  stroke: #333;
}

.gallery__menu {
  display: flex;
  flex-direction: column;
  gap: 1px;
  border-top: 1px solid #e0e0e0;
  margin-top: 1px;
  padding: 1px 4px;
  font-size: 9px;
  color: #666;
}

.gallery__menu button {
  display: flex;
  align-items: center;
  gap: 9px;
  height: 18px;
}

.gallery__grip {
  position: absolute;
  right: 3px;
  bottom: 2px;
  fill: #aaa;
  stroke: none;
}

/* screen recorder overlay */
.ezvid {
  position: absolute;
  bottom: 38px;
  left: 4px;
  display: flex;
  box-sizing: border-box;
  width: 172px;
  height: 31px;
  border-radius: 4px;
  border-bottom: 4px solid #c4c4c4;
  background: linear-gradient(90deg, #d4d4d4 12px, #f1f1f1 12px, #f1f1f1 72px, #e2e2e2 72px);
}

.ezvid__rec {
  width: 7px;
  height: 7px;
  margin: 4px 7px 0 2px;
  background: #eab0a6;
}

.ezvid__logo {
  display: flex;
  flex-direction: column;
  width: 56px;
}

.ezvid__name {
  font-size: 21px;
  line-height: 22px;
  font-weight: 300;
  color: #777;
}

.ezvid__name b {
  font-weight: 400;
  color: #333;
}

.ezvid__sub {
  font-size: 7px;
  line-height: 7px;
  letter-spacing: 2px;
}

.ezvid__buttons {
  display: flex;
  flex: none;
  height: 27px;
  margin-top: 4px;
  border-radius: 3px 3px 0 0;
  background: #4a4a4a;
  color: #fff;
}

.ezvid__buttons button {
  display: flex;
  flex-direction: column;
  align-items: center;
  width: 29px;
  padding-top: 1px;
  font-size: 7px;
  line-height: 11px;
}

.ezvid__buttons button + button {
  border-left: 1px solid #333;
}

.ezvid__buttons svg {
  fill: #111;
  stroke: none;
}
</style>
